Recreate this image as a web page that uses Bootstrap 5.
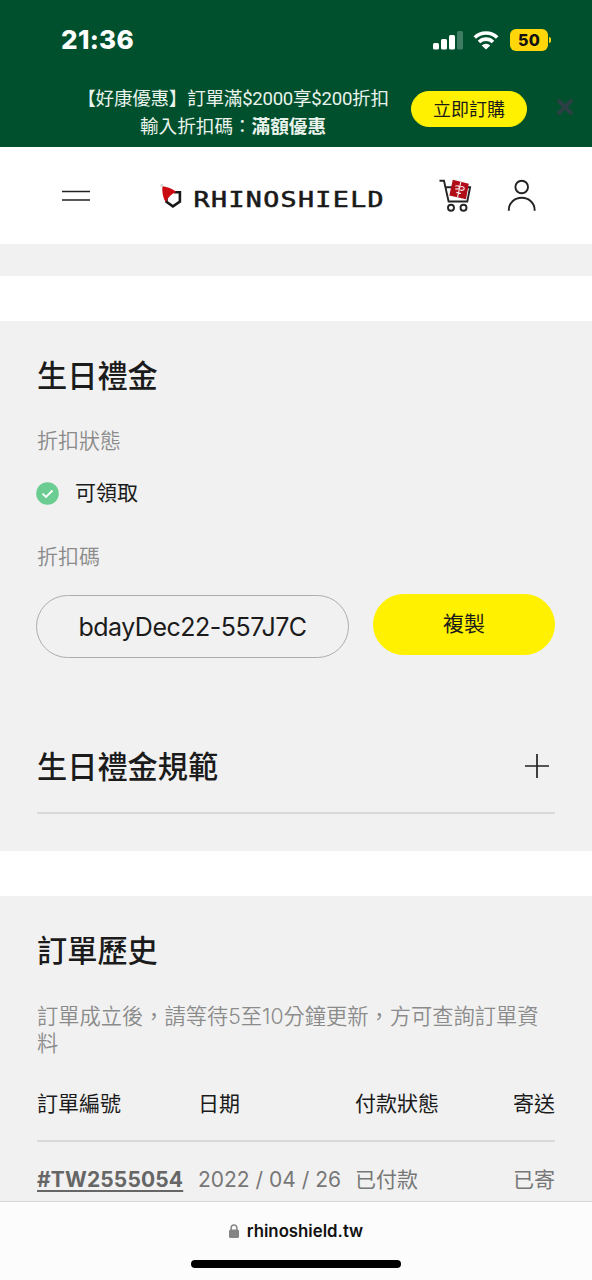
<!DOCTYPE html>
<html lang="zh-Hant">
<head>
<meta charset="utf-8">
<meta name="viewport" content="width=device-width, initial-scale=1">
<title>RHINOSHIELD</title>
<link href="https://cdn.jsdelivr.net/npm/bootstrap@5.3.0/dist/css/bootstrap.min.css" rel="stylesheet">
<style>
  body { font-family: Inter, "Noto Sans CJK TC", sans-serif; font-size: 21px; line-height: 28px; color: #1b1b1b; background: #fff; height: 1280px; overflow: hidden; }
  .top-area { background: #00502d; height: 147px; color: #fff; }
  .status-row { height: 79px; padding: 0 41px 0 61px; }
  .clock { font-size: 26px; font-weight: 800; letter-spacing: .3px; }
  .battery { width: 38px; height: 22px; border-radius: 6px; background: #ffd60a; color: #111; font-size: 16px; font-weight: 800; line-height: 22px; letter-spacing: .3px; }
  .battery-tip { width: 2px; height: 6px; border-radius: 0 2px 2px 0; background: #ffd60a; margin-left: 1px; }
  .promo { height: 68px; padding-left: 74px; padding-top: 6px; }
  .promo-text { width: 318px; font-family: Roboto, "Noto Sans CJK TC", sans-serif; font-size: 18.6px; line-height: 28px; text-align: center; color: #e9f3ec; }
  .promo-line { letter-spacing: -.27px; }
  .btn-lemon { --bs-btn-bg: #fff100; --bs-btn-color: #1b1b1b; --bs-btn-hover-bg: #f3e500; --bs-btn-border-color: #fff100; border-radius: 50px; }
  .btn-order { width: 116px; height: 36px; margin: 6px 0 0 19px; padding: 0; font-size: 18px; line-height: 31px; }
  .promo-close { margin: 13px 0 0 29px; }
  .site-nav { height: 97px; padding: 0; }
  .panel { background: #f1f1f1; padding: 0 37px; }
  .panel-strip { height: 32px; }
  .gap-band { height: 45px; }
  .panel-title { font-size: 30.2px; line-height: 40px; font-weight: 500; margin: 0; }
  .muted-label { color: #8b8b8b; font-weight: 350; }
  .code-box { width: 313px; height: 63px; margin-left: -1px; border: 1.5px solid #adadad; border-radius: 32px; font-size: 25px; letter-spacing: -.5px; }
  .btn-copy { width: 182px; height: 61px; font-size: 21px; padding: 0 0 2px; margin-top: -1px; }
  .rule-line { border-bottom: 2px solid #d9d9d9; }
  .order-note { width: 505px; font-size: 21.25px; line-height: 27px; }
  .order-grid { display: grid; grid-template-columns: 161px 157px 158px 42px; white-space: nowrap; }
  .order-link { color: #666; font-weight: 700; text-decoration: underline; text-decoration-thickness: 2px; text-underline-offset: 3px; letter-spacing: .15px; }
  .browser-bar { height: 79px; background: #fcfcfc; border-top: 1px solid #d8d8d8; }
  .host { font-size: 16.8px; font-weight: 600; color: #111; line-height: 22px; }
  .home-pill { width: 210px; height: 8px; border-radius: 4px; background: #000; }
</style>
</head>
<body>
<header class="top-area">
  <div class="status-row d-flex align-items-center justify-content-between">
    <span class="clock">21:36</span>
    <div class="d-flex align-items-center">
      <svg width="31" height="20" viewBox="0 0 31 20" fill="#fff"><rect x="0" y="13" width="6" height="6.5" rx="1.5"/><rect x="8" y="9" width="6" height="10.500" rx="1.500"/><rect x="16" y="5" width="6" height="14.500" rx="1.500"/><rect x="24" y="1" width="6" height="18.500" rx="1.500" opacity=".25"/></svg>
      <svg class="ms-2" style="margin-right:10px" width="28" height="20" viewBox="0 0 28 20" fill="none" stroke="#fff" stroke-width="3.600"><path d="M2.800 7.500a16 16 0 0 1 22.400 0M7 12a10 10 0 0 1 14 0"/><path d="M14 19.500 9.700 15.400a6.500 6.500 0 0 1 8.600 0z" fill="#fff" stroke="none"/></svg>
      <span class="battery text-center">50</span><span class="battery-tip"></span>
    </div>
  </div>
  <div class="promo d-flex align-items-start">
    <div class="promo-text text-nowrap"><span class="promo-line">【好康優惠】訂單滿$2000享$200折扣</span><br>輸入折扣碼：<b>滿額優惠</b></div>
    <button class="btn btn-lemon btn-order">立即訂購</button>
    <svg class="promo-close" width="18" height="18" viewBox="0 0 18 18" stroke="#2c3f45" stroke-width="4"><path d="m2 2 14 14M16 2 2 16"/></svg>
  </div>
</header>

<nav class="navbar site-nav d-flex flex-nowrap align-items-start justify-content-start">
  <svg style="margin:43px 0 0 62px" width="28" height="12" viewBox="0 0 28 12" stroke="#222" stroke-width="1.600"><path d="M0 1.500h28M0 10h28"/></svg>
  <svg style="margin:35px 0 0 69px" width="226" height="30" viewBox="159 182 226 30">
    <path d="M174 192.300h5.900v9.200l-7 4.800-6.400-4.500v-4" fill="none" stroke="#191919" stroke-width="2.600"/>
    <path d="M162.300 186.200c5 .3 11 3 14 5.800-4.500 1.500-8.200 5-10.300 10-2.800-3-4-10-3.700-15.800z" fill="#cb0b12"/>
    <circle cx="161.800" cy="185.400" r="1.600" fill="#d8dadb"/>
    <text transform="translate(193.600 206.800) scale(1.250 1)" font-family="'DejaVu Sans Mono',monospace" font-size="21.300" textLength="152" fill="#191919" stroke="#191919" stroke-width=".55">RHINOSHIELD</text>
  </svg>
  <svg style="margin:30px 0 0 53px" width="36" height="36" viewBox="438 177 36 36" fill="none" stroke="#242424" stroke-width="1.900">
    <path d="M439.500 180.800h4.500l4.600 20.700h18.700l2.800-14.300h-24.300"/>
    <circle cx="451" cy="207.700" r="3"/><circle cx="463.500" cy="207.700" r="3"/>
    <path d="m452.800 179.700 16 4-2.800 15.500-16.700-3.800z" fill="#b10d18" stroke="none"/>
    <path d="m460.800 182-3.300 15.500M455.300 186.200c2-1 4-.3 4.200 1.700-1 1.300-2.500 1.300-4.200 1M460.400 187c1.500-1 3.800-.3 3.800 1.500s-2.500 2.300-4 1.300M456.300 192.400l4.700 1.100" stroke="#f6e7e7" stroke-width="1.200"/>
  </svg>
  <svg style="margin:32px 0 0 33px" width="30" height="34" viewBox="507 179 30 34" fill="none" stroke="#222" stroke-width="1.900"><circle cx="521.700" cy="187" r="6.300"/><path d="M508.800 210.800v-1c0-6.700 5.800-12 12.900-12s12.900 5.300 12.900 12v1"/></svg>
</nav>
<div class="panel panel-strip"></div>
<div class="gap-band"></div>

<section class="panel" style="height:530px;padding-top:35px">
  <h2 class="panel-title">生日禮金</h2>
  <div class="muted-label" style="margin-top:31px">折扣狀態</div>
  <div class="d-flex align-items-center" style="margin:24px 0 0 -1px">
    <svg width="23" height="23" viewBox="0 0 23 23"><circle cx="11.500" cy="11.500" r="11.300" fill="#6bcd92"/><path d="m6.500 11.700 3.500 3.300 6.500-6.500" fill="none" stroke="#fff" stroke-width="1.800"/></svg>
    <span style="margin-left:16px">可領取</span>
  </div>
  <div class="muted-label" style="margin-top:36px">折扣碼</div>
  <div class="d-flex justify-content-between align-items-start" style="margin-top:24px">
    <div class="code-box d-flex align-items-center justify-content-center">bdayDec22-557J7C</div>
    <button class="btn btn-lemon btn-copy">複製</button>
  </div>
  <div class="rule-line d-flex justify-content-between align-items-start" style="margin-top:89px;height:67px">
    <h2 class="panel-title">生日禮金規範</h2>
    <svg style="margin:7px 6px 0 0" width="24" height="24" viewBox="0 0 24 24" stroke="#222" stroke-width="1.700"><path d="M0 12h24M12 0v24"/></svg>
  </div>
</section>
<div class="gap-band"></div>

<section class="panel" style="height:305px;padding-top:35px">
  <h2 class="panel-title">訂單歷史</h2>
  <p class="muted-label order-note mb-0" style="margin-top:32px">訂單成立後，請等待5至10分鐘更新，方可查詢訂單資料</p>
  <div class="order-grid rule-line" style="margin-top:33px;height:52px"><span>訂單編號</span><span>日期</span><span>付款狀態</span><span>寄送</span></div>
  <div class="order-grid" style="margin-top:24px;color:#777"><a href="#" class="order-link">#TW2555054</a><span>2022 / 04 / 26</span><span>已付款</span><span>已寄</span></div>
</section>

<footer class="browser-bar d-flex flex-column align-items-center">
  <div class="d-flex align-items-center" style="margin-top:18px">
    <svg width="10" height="14" viewBox="0 0 10 14"><rect y="5.500" width="10" height="8.500" rx="1.500" fill="#858585"/><path d="M2.200 6V3.800a2.800 2.800 0 0 1 5.600 0V6" fill="none" stroke="#858585" stroke-width="1.500"/></svg>
    <span class="host" style="margin-left:8px">rhinoshield.tw</span>
  </div>
  <div class="home-pill" style="margin-top:18px"></div>
</footer>
<script src="https://cdn.jsdelivr.net/npm/bootstrap@5.3.0/dist/js/bootstrap.bundle.min.js"></script>
</body>
</html>
